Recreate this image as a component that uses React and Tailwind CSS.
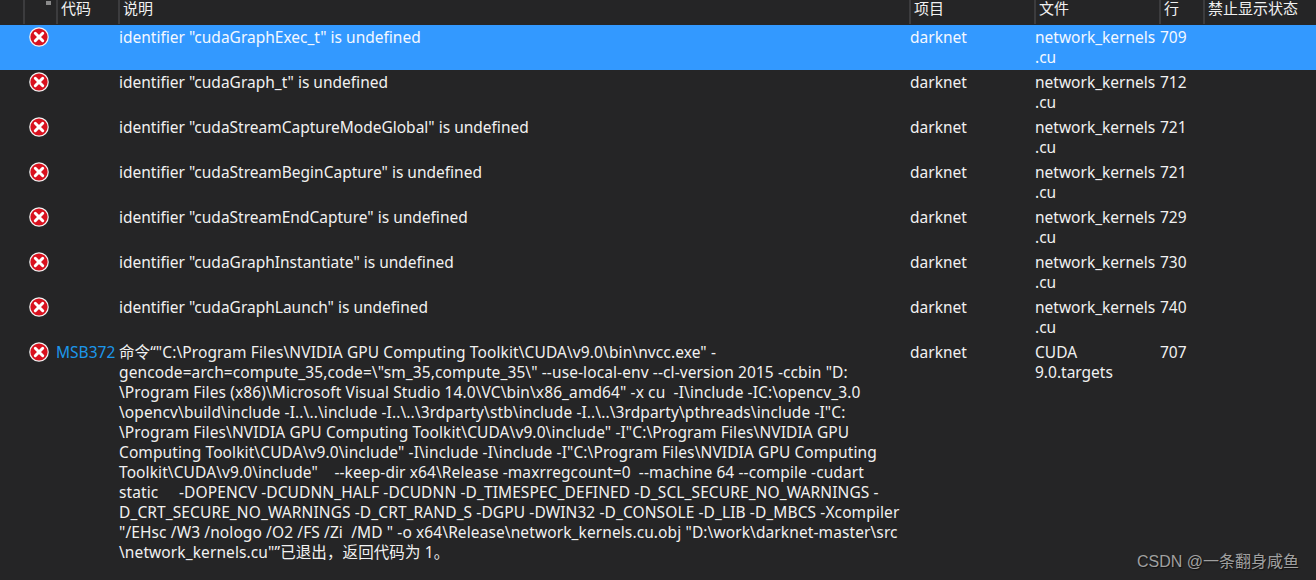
import React from 'react';

const rows = [
  { id: 'cudaGraphExec_t', line: '709', selected: true },
  { id: 'cudaGraph_t', line: '712' },
  { id: 'cudaStreamCaptureModeGlobal', line: '721' },
  { id: 'cudaStreamBeginCapture', line: '721' },
  { id: 'cudaStreamEndCapture', line: '729' },
  { id: 'cudaGraphInstantiate', line: '730' },
  { id: 'cudaGraphLaunch', line: '740' },
];

const messageLines = [
  '命令“"C:\\Program Files\\NVIDIA GPU Computing Toolkit\\CUDA\\v9.0\\bin\\nvcc.exe" -',
  'gencode=arch=compute_35,code=\\"sm_35,compute_35\\" --use-local-env --cl-version 2015 -ccbin "D:',
  '\\Program Files (x86)\\Microsoft Visual Studio 14.0\\VC\\bin\\x86_amd64" -x cu  -I\\include -IC:\\opencv_3.0',
  '\\opencv\\build\\include -I..\\..\\include -I..\\..\\3rdparty\\stb\\include -I..\\..\\3rdparty\\pthreads\\include -I"C:',
  '\\Program Files\\NVIDIA GPU Computing Toolkit\\CUDA\\v9.0\\include" -I"C:\\Program Files\\NVIDIA GPU',
  'Computing Toolkit\\CUDA\\v9.0\\include" -I\\include -I\\include -I"C:\\Program Files\\NVIDIA GPU Computing',
  'Toolkit\\CUDA\\v9.0\\include"    --keep-dir x64\\Release -maxrregcount=0  --machine 64 --compile -cudart',
  'static     -DOPENCV -DCUDNN_HALF -DCUDNN -D_TIMESPEC_DEFINED -D_SCL_SECURE_NO_WARNINGS -',
  'D_CRT_SECURE_NO_WARNINGS -D_CRT_RAND_S -DGPU -DWIN32 -D_CONSOLE -D_LIB -D_MBCS -Xcompiler',
  '"/EHsc /W3 /nologo /O2 /FS /Zi  /MD " -o x64\\Release\\network_kernels.cu.obj "D:\\work\\darknet-master\\src',
  '\\network_kernels.cu"”已退出，返回代码为 1。',
];

const ErrorIcon = () => (
  <svg width="20" height="20" viewBox="0 0 20 20" className="block">
    <circle cx="10" cy="10" r="9.8" fill="#f4f4f4" />
    <circle cx="10" cy="10" r="8.6" fill="#d9121f" />
    <path d="M6.3 6.3 L13.7 13.7 M13.7 6.3 L6.3 13.7" stroke="#fff" strokeWidth="3" strokeLinecap="round" />
  </svg>
);

const HeaderCell = ({ className, children }) => (
  <div className={`h-6 border-l-2 border-[#3c3c3e] pl-[3px] leading-[17px] ${className}`}>{children}</div>
);

const Row = ({ code, selected, message, project, file, line, className }) => (
  <div className={`flex items-start pt-[2px] ${selected ? 'bg-[#3399ff] text-[#f4f8ff]' : ''} ${className}`}>
    <div className="w-[56px] shrink-0 pl-[29px]">
      <ErrorIcon />
    </div>
    <div className="w-[63px] shrink-0 whitespace-nowrap text-[#1c97ea]">{code}</div>
    <div className="w-[791px] shrink-0 whitespace-pre">{message}</div>
    <div className="w-[125px] shrink-0">{project}</div>
    <div className="w-[125px] shrink-0 whitespace-pre-line">{file}</div>
    <div className="w-[40px] shrink-0">{line}</div>
  </div>
);

export default function App() {
  return (
    <div className="relative h-[580px] w-[1316px] overflow-hidden bg-[#252526] text-[15.5px] leading-[20px] text-[#f1f1f1] font-['Noto_Sans','Noto_Sans_CJK_SC',sans-serif]">
      <div className="flex h-[25px] text-[15px]">
        <div className="w-[23px] shrink-0" />
        <HeaderCell className="relative w-[33px] shrink-0">
          <span className="absolute right-[5px] top-[1px] h-[4px] w-[5px] bg-[#8a8a8a]" />
        </HeaderCell>
        <HeaderCell className="w-[62px] shrink-0">代码</HeaderCell>
        <HeaderCell className="w-[791px] shrink-0">说明</HeaderCell>
        <HeaderCell className="w-[125px] shrink-0">项目</HeaderCell>
        <HeaderCell className="w-[125px] shrink-0">文件</HeaderCell>
        <HeaderCell className="w-[44px] shrink-0">行</HeaderCell>
        <HeaderCell className="flex-1">禁止显示状态</HeaderCell>
      </div>
      {rows.map((r) => (
        <Row
          key={r.id + r.line}
          className="h-[45px]"
          selected={r.selected}
          message={`identifier "${r.id}" is undefined`}
          project="darknet"
          file={'network_kernels\n.cu'}
          line={r.line}
        />
      ))}
      <Row
        code="MSB372"
        message={messageLines.map((l, i) => (
          <div key={i} className="tracking-[0.1px]">{l}</div>
        ))}
        project="darknet"
        file={'CUDA\n9.0.targets'}
        line="707"
      />
      <div className="absolute bottom-[6px] right-[17px] text-[16px] leading-[24px] text-[#a0a0a0] [text-shadow:1px_1px_1px_#111] font-['Liberation_Sans','Noto_Sans_CJK_SC',sans-serif]">
        CSDN @一条翻身咸鱼
      </div>
    </div>
  );
}
